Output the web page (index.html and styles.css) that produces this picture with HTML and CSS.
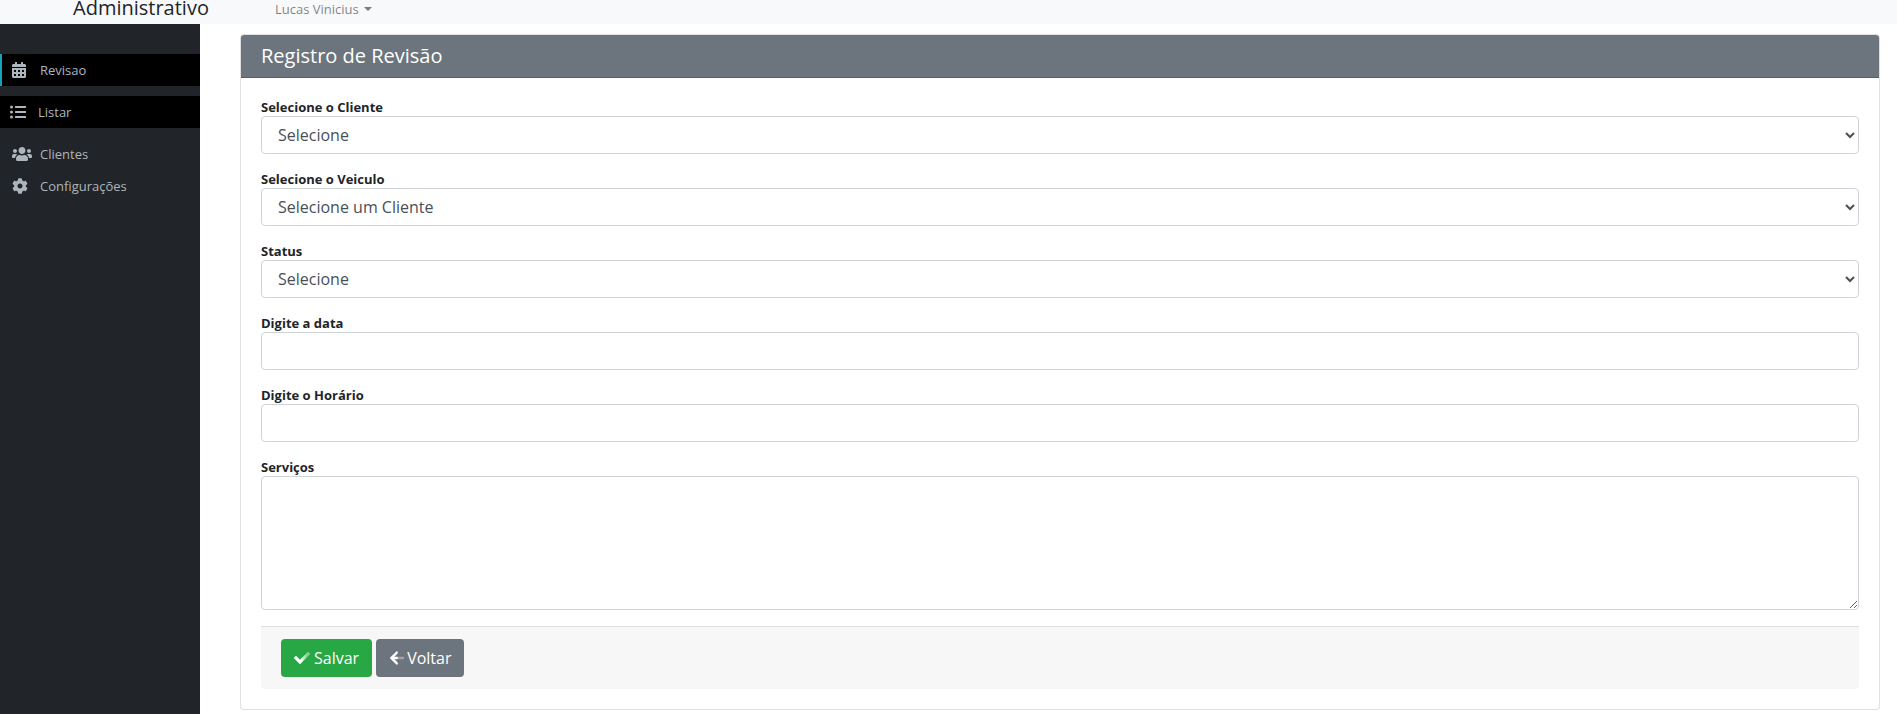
FILE: index.html
```html
<!DOCTYPE html>
<html lang="pt-BR">
<head>
    <meta charset="UTF-8">
    <title>Registro de Revisão</title>
    <link rel="stylesheet" href="styles.css">
</head>
<body>
    <nav class="navbar">
        <span class="brand">Administrativo</span>
        <span class="user">Lucas Vinicius <i class="caret"></i></span>
    </nav>
    <div class="wrapper">
        <aside class="sidebar">
            <a class="side-link active first" href="#">
                <svg class="icon" viewBox="0 0 448 512"><path d="M0 464c0 26.5 21.5 48 48 48h352c26.5 0 48-21.5 48-48V192H0v272zm320-196c0-6.6 5.4-12 12-12h40c6.6 0 12 5.4 12 12v40c0 6.6-5.4 12-12 12h-40c-6.6 0-12-5.4-12-12v-40zm0 128c0-6.6 5.4-12 12-12h40c6.6 0 12 5.4 12 12v40c0 6.6-5.4 12-12 12h-40c-6.6 0-12-5.4-12-12v-40zM192 268c0-6.6 5.4-12 12-12h40c6.6 0 12 5.4 12 12v40c0 6.6-5.4 12-12 12h-40c-6.6 0-12-5.4-12-12v-40zm0 128c0-6.6 5.4-12 12-12h40c6.6 0 12 5.4 12 12v40c0 6.6-5.4 12-12 12h-40c-6.6 0-12-5.4-12-12v-40zM64 268c0-6.6 5.4-12 12-12h40c6.6 0 12 5.4 12 12v40c0 6.6-5.4 12-12 12H76c-6.6 0-12-5.4-12-12v-40zm0 128c0-6.6 5.4-12 12-12h40c6.6 0 12 5.4 12 12v40c0 6.6-5.4 12-12 12H76c-6.6 0-12-5.4-12-12v-40zM400 64h-48V16c0-8.8-7.2-16-16-16h-32c-8.8 0-16 7.2-16 16v48H160V16c0-8.8-7.2-16-16-16h-32c-8.8 0-16 7.2-16 16v48H48C21.5 64 0 85.5 0 112v48h448v-48c0-26.5-21.5-48-48-48z"/></svg>
                <span>Revisao</span>
            </a>
            <a class="side-link active list" href="#">
                <svg class="icon" viewBox="0 0 512 512"><path d="M48 48a48 48 0 1 0 48 48 48 48 0 0 0-48-48zm0 160a48 48 0 1 0 48 48 48 48 0 0 0-48-48zm0 160a48 48 0 1 0 48 48 48 48 0 0 0-48-48zm448 16H176a16 16 0 0 0-16 16v32a16 16 0 0 0 16 16h320a16 16 0 0 0 16-16v-32a16 16 0 0 0-16-16zm0-320H176a16 16 0 0 0-16 16v32a16 16 0 0 0 16 16h320a16 16 0 0 0 16-16V80a16 16 0 0 0-16-16zm0 160H176a16 16 0 0 0-16 16v32a16 16 0 0 0 16 16h320a16 16 0 0 0 16-16v-32a16 16 0 0 0-16-16z"/></svg>
                <span>Listar</span>
            </a>
            <a class="side-link" href="#">
                <svg class="icon" viewBox="0 0 640 512"><path d="M96 224c35.3 0 64-28.7 64-64s-28.7-64-64-64-64 28.7-64 64 28.7 64 64 64zm448 0c35.3 0 64-28.7 64-64s-28.7-64-64-64-64 28.7-64 64 28.7 64 64 64zm32 32h-64c-17.6 0-33.5 7.1-45.1 18.6 40.3 22.1 68.9 62 75.1 109.4h66c17.7 0 32-14.3 32-32v-32c0-35.3-28.7-64-64-64zm-256 0c61.9 0 112-50.1 112-112S381.9 32 320 32 208 82.1 208 144s50.1 112 112 112zm76.8 32h-8.3c-20.8 10-43.9 16-68.5 16s-47.6-6-68.5-16h-8.3C179.6 288 128 339.6 128 403.2V432c0 26.5 21.5 48 48 48h288c26.5 0 48-21.5 48-48v-28.8c0-63.6-51.6-115.2-115.2-115.2zm-223.7-13.4C161.5 263.1 145.6 256 128 256H64c-35.3 0-64 28.7-64 64v32c0 17.7 14.3 32 32 32h65.9c6.3-47.4 34.9-87.3 75.2-109.4z"/></svg>
                <span>Clientes</span>
            </a>
            <a class="side-link" href="#">
                <svg class="icon" viewBox="0 0 512 512"><path d="M487.4 315.7l-42.6-24.6c4.3-23.2 4.3-47 0-70.2l42.6-24.6c4.9-2.8 7.1-8.6 5.5-14-11.1-35.6-30-67.8-54.7-94.6-3.8-4.1-10-5.1-14.8-2.3L380.8 110c-17.9-15.4-38.5-27.3-60.8-35.1V25.8c0-5.6-3.9-10.5-9.4-11.7-36.7-8.2-74.3-7.8-109.2 0-5.5 1.2-9.4 6.1-9.4 11.7V75c-22.2 7.9-42.8 19.8-60.8 35.1L88.7 85.5c-4.9-2.8-11-1.9-14.8 2.3-24.7 26.7-43.6 58.9-54.7 94.6-1.7 5.4.6 11.2 5.5 14L67.3 221c-4.3 23.2-4.3 47 0 70.2l-42.6 24.6c-4.9 2.8-7.1 8.6-5.5 14 11.1 35.6 30 67.8 54.7 94.6 3.8 4.1 10 5.1 14.8 2.3l42.6-24.6c17.9 15.4 38.5 27.3 60.8 35.1v49.2c0 5.6 3.9 10.5 9.4 11.7 36.7 8.2 74.3 7.8 109.2 0 5.5-1.2 9.4-6.1 9.4-11.7v-49.2c22.2-7.9 42.8-19.8 60.8-35.1l42.6 24.6c4.9 2.8 11 1.9 14.8-2.3 24.7-26.7 43.6-58.9 54.7-94.6 1.5-5.5-.7-11.3-5.6-14.1zM256 336c-44.1 0-80-35.9-80-80s35.9-80 80-80 80 35.9 80 80-35.9 80-80 80z"/></svg>
                <span>Configurações</span>
            </a>
        </aside>
        <main class="content">
            <div class="card">
                <div class="card-header">Registro de Revisão</div>
                <form class="card-body">
                    <div class="form-group">
                        <label for="cliente">Selecione o Cliente</label>
                        <select id="cliente" class="form-control"><option>Selecione</option></select>
                    </div>
                    <div class="form-group">
                        <label for="veiculo">Selecione o Veiculo</label>
                        <select id="veiculo" class="form-control"><option>Selecione um Cliente</option></select>
                    </div>
                    <div class="form-group">
                        <label for="status">Status</label>
                        <select id="status" class="form-control"><option>Selecione</option></select>
                    </div>
                    <div class="form-group">
                        <label for="data">Digite a data</label>
                        <input id="data" class="form-control" type="text">
                    </div>
                    <div class="form-group">
                        <label for="horario">Digite o Horário</label>
                        <input id="horario" class="form-control" type="text">
                    </div>
                    <div class="form-group">
                        <label for="servicos">Serviços</label>
                        <textarea id="servicos" class="form-control"></textarea>
                    </div>
                    <div class="form-footer">
                        <button type="submit" class="btn btn-success">
                            <svg class="btn-icon" viewBox="0 0 512 512">
                                <defs>
                                    <linearGradient id="fade-check">
                                        <stop offset="0.45" stop-color="#fff"/>
                                        <stop offset="0.8" stop-color="#fff" stop-opacity="0.45"/>
                                    </linearGradient>
                                </defs>
                                <path fill="url(#fade-check)" d="M173.898 439.404l-166.4-166.4c-9.997-9.997-9.997-26.206 0-36.204l36.203-36.204c9.997-9.998 26.207-9.998 36.204 0L192 312.69 432.095 72.596c9.997-9.997 26.207-9.997 36.204 0l36.203 36.204c9.997 9.997 9.997 26.206 0 36.204l-294.4 294.401c-9.998 9.997-26.207 9.997-36.204-.001z"/>
                            </svg>
                            Salvar
                        </button>
                        <button type="button" class="btn btn-secondary">
                            <svg class="btn-icon" viewBox="0 0 448 512">
                                <defs>
                                    <linearGradient id="fade-arrow">
                                        <stop offset="0.5" stop-color="#fff"/>
                                        <stop offset="0.6" stop-color="#fff" stop-opacity="0.35"/>
                                    </linearGradient>
                                </defs>
                                <path fill="url(#fade-arrow)" d="M257.5 445.1l-22.2 22.2c-9.4 9.4-24.6 9.4-33.9 0L7 273c-9.4-9.4-9.4-24.6 0-33.9L201.4 44.7c9.4-9.4 24.6-9.4 33.9 0l22.2 22.2c9.5 9.5 9.3 25-.4 34.3L136.6 216H424c13.3 0 24 10.7 24 24v32c0 13.3-10.7 24-24 24H136.6l120.5 114.8c9.8 9.3 10 24.8.4 34.3z"/>
                            </svg>
                            Voltar
                        </button>
                    </div>
                </form>
            </div>
        </main>
    </div>
</body>
</html>
```

FILE: styles.css
```css
* {
    box-sizing: border-box;
}

body {
    font-family: 'Open Sans', sans-serif;
    margin: 0;
    height: 100vh;
    overflow: hidden;
    background-color: #fff;
    color: #212529;
}

/* top bar, the brand is cut off by the top of the window */
.navbar {
    display: flex;
    align-items: flex-end;
    height: 24px;
    padding-left: 73px;
    background-color: #f8f9fa;
    overflow: hidden;
}

.brand {
    font-size: 20px;
    line-height: 27px;
    margin-bottom: 3px;
    color: #212529;
}

.user {
    display: flex;
    align-self: flex-start;
    align-items: center;
    height: 18px;
    margin-left: 66px;
    font-size: 13px;
    color: rgba(0, 0, 0, 0.5);
}

.caret {
    width: 0;
    height: 0;
    margin-left: 5px;
    border-top: 4px solid rgba(0, 0, 0, 0.5);
    border-left: 4px solid transparent;
    border-right: 4px solid transparent;
}

.wrapper {
    display: flex;
    height: 690px;
}

.sidebar {
    width: 200px;
    flex-shrink: 0;
    padding-top: 30px;
    background-color: #212428;
}

.side-link {
    display: flex;
    align-items: center;
    height: 32px;
    padding-left: 12px;
    font-size: 13px;
    color: #adb5bd;
    text-decoration: none;
}

.side-link.active {
    background-color: #000;
    margin-bottom: 10px;
}

.side-link.first {
    border-left: 2px solid #17a2b8;
    padding-left: 9px;
}

.side-link.first .icon {
    margin-right: 13px;
}

.side-link.list {
    padding-left: 10px;
}

.icon {
    width: 16px;
    height: 16px;
    margin-right: 12px;
    fill: #adb5bd;
    flex-shrink: 0;
}

.side-link:nth-child(3) .icon {
    width: 20px;
    margin-right: 8px;
}

.content {
    flex: 1;
    padding: 10px 17px 4px 40px;
}

.card {
    height: 676px;
    background-color: #fff;
    border: 1px solid rgba(0, 0, 0, 0.125);
    border-radius: 4px;
    overflow: hidden;
}

.card-header {
    height: 43px;
    padding-left: 20px;
    font-size: 20px;
    line-height: 42px;
    color: #fff;
    background-color: #6c757d;
    border-bottom: 1px solid #565e64;
}

.card-body {
    padding: 20px 20px 0 20px;
}

.form-group {
    margin-bottom: 16px;
}

.form-group label {
    display: block;
    height: 18px;
    font-size: 13px;
    font-weight: 700;
    line-height: 18px;
    color: #212529;
}

.form-control {
    display: block;
    width: 100%;
    height: 38px;
    padding: 6px 12px;
    font-family: inherit;
    font-size: 16px;
    color: #495057;
    background-color: #fff;
    border: 1px solid #ced4da;
    border-radius: 4px;
}

textarea.form-control {
    height: 134px;
}

.form-footer {
    display: flex;
    gap: 4px;
    height: 63px;
    padding: 12px 20px;
    background-color: #f7f7f7;
    border-top: 1px solid #dfdfdf;
    border-radius: 0 0 4px 4px;
}

.btn {
    display: flex;
    align-items: center;
    height: 38px;
    padding: 0 12px;
    font-family: inherit;
    font-size: 16px;
    color: #fff;
    border: 1px solid transparent;
    border-radius: 4px;
    cursor: pointer;
}

.btn-success {
    background-color: #28a745;
}

.btn-secondary {
    background-color: #6c757d;
}

.btn-icon {
    width: 16px;
    height: 16px;
    margin-right: 2px;
}

.btn-success .btn-icon {
    margin-right: 4px;
}
```
